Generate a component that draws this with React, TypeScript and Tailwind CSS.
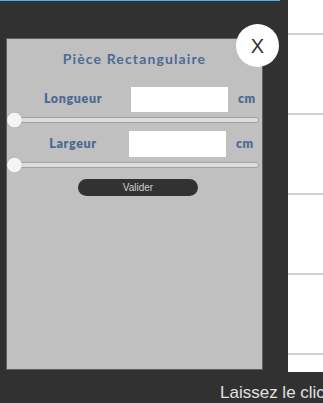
import React from "react";

function Slider() {
  return (
    <div className="relative mt-[5px] ml-[1px] mr-[3px] h-[6px] rounded-full border border-[#a3a3a3] bg-[#dcdcdc]">
      {/* thumb */}
      <div className="absolute left-[-2px] top-1/2 h-[15px] w-[15px] -translate-y-1/2 rounded-full bg-[#f4f4f4] shadow-[0_0_1px_rgba(0,0,0,0.3)]" />
    </div>
  );
}

function Row({ label, inputLeft }: { label: string; inputLeft: string }) {
  return (
    <div className="flex h-full items-center">
      <div className="ml-[16px] w-[100px] text-center text-[12.5px] font-extrabold tracking-[0.05em] text-[#4d6a94]">
        {label}
      </div>
      <div className={`${inputLeft} h-full w-[97px] bg-white`} />
      <div className="ml-[10px] text-[12.5px] font-extrabold tracking-[0.04em] text-[#4d6a94]">cm</div>
    </div>
  );
}

export default function App() {
  return (
    <div
      className="flex h-[403px] w-[323px] flex-col overflow-hidden bg-[#313131]"
      style={{ fontFamily: "Lato, 'Liberation Sans', sans-serif" }}
    >
      <div className="flex h-[372px]">
        {/* left dark side */}
        <div className="flex w-[288px] flex-col">
          <div className="h-px w-[280px] bg-[#3cb4ea]" />
          <div className="relative ml-[6px] mt-[37px] flex h-[332px] w-[257px] flex-col border border-[#5b6167] bg-[#c0c0c0]">
            <div className="mt-[10px] h-[20px] text-center text-[14px] font-bold leading-[20px] tracking-[0.08em] text-[#4d6a94]">
              Pièce Rectangulaire
            </div>
            <div className="mt-[18px] h-[25px]">
              <Row label="Longueur" inputLeft="ml-[8px]" />
            </div>
            <Slider />
            <div className="mt-[8px] h-[26px]">
              <Row label="Largeur" inputLeft="ml-[6px]" />
            </div>
            <Slider />
            <button
              className="ml-[71px] mt-[11px] h-[17px] w-[120px] rounded-full bg-[#323232] text-[10px] leading-[17px] text-[#cfcfcf]"
              style={{ fontFamily: "'Liberation Sans', Arial, sans-serif" }}
            >
              Valider
            </button>
            {/* close button */}
            <div
              className="absolute left-[229px] top-[-15px] flex h-[43px] w-[43px] items-center justify-center rounded-full bg-white text-[20px] text-[#333333]"
              style={{ fontFamily: "'Liberation Sans', Arial, sans-serif" }}
            >
              X
            </div>
          </div>
        </div>
        {/* right white list */}
        <div className="flex w-[35px] flex-col bg-white">
          <div className="h-[33px]" />
          <div className="h-[80px] border-t-2 border-[#cfcfcf]" />
          <div className="h-[80px] border-t-2 border-[#cfcfcf]" />
          <div className="h-[80px] border-t-2 border-[#cfcfcf]" />
          <div className="h-[80px] border-t-2 border-[#cfcfcf]" />
          <div className="flex-1 border-t-2 border-[#cfcfcf]" />
        </div>
      </div>
      <div
        className="whitespace-nowrap pl-[220px] pt-[11px] text-[17px] leading-[20px] text-[#e0e0e0]"
        style={{ fontFamily: "'Liberation Sans', Arial, sans-serif" }}
      >
        Laissez le clic enfoncé
      </div>
    </div>
  );
}
